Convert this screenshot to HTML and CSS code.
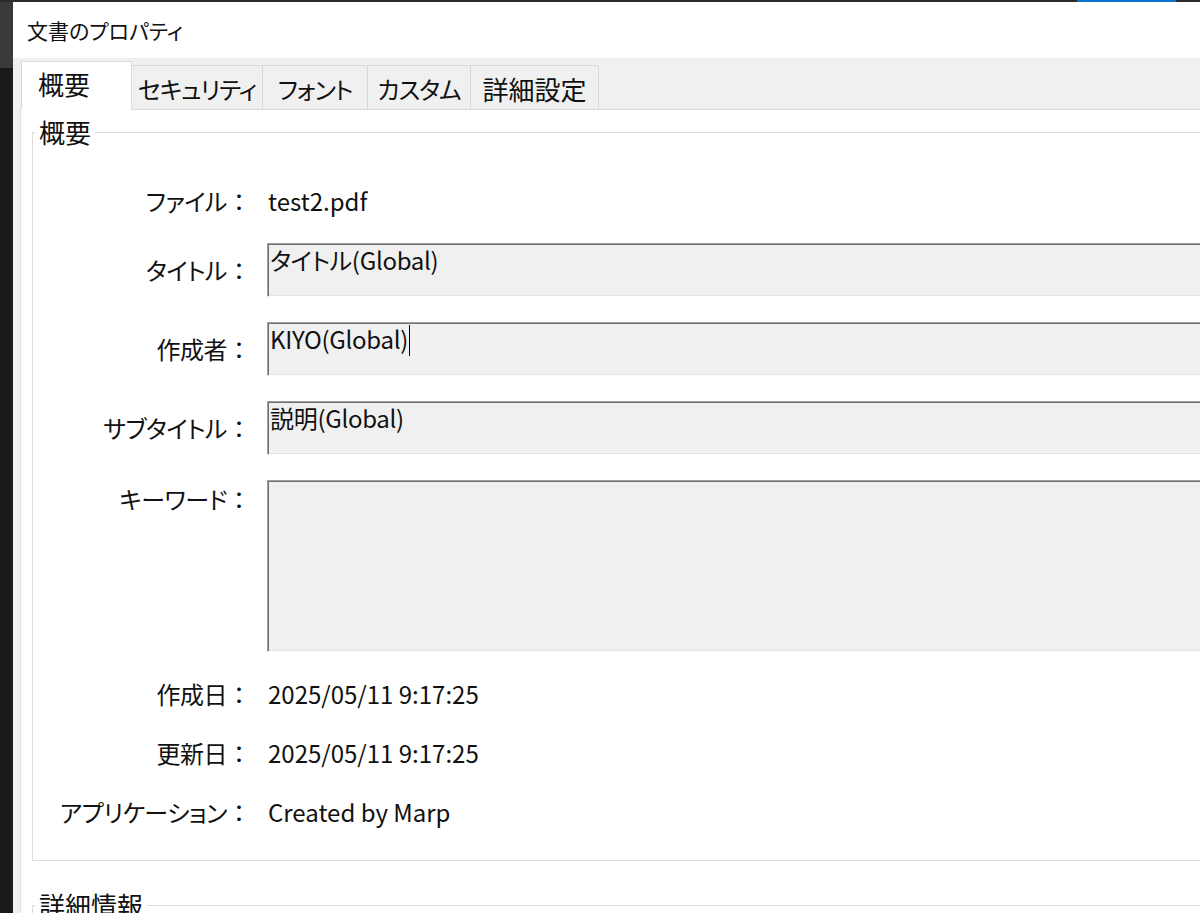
FILE: index.html
```html
<!DOCTYPE html>
<html lang="ja">
<head>
<meta charset="utf-8">
<title>文書のプロパティ</title>
<link rel="stylesheet" href="styles.css">
</head>
<body>
<div class="screen">
  <div class="topbar"><div class="topbar-fill"></div><div class="topbar-active"></div></div>
  <div class="desk">
    <div class="left-strip"><div class="ls-top"></div><div class="ls-bottom"></div></div>
    <div class="window">
      <div class="titlebar">文書のプロパティ</div>
      <div class="dialog-body">
        <div class="tabs">
          <div class="tab active">概要</div>
          <div class="tab tab-security">セキュリティ</div>
          <div class="tab tab-font">フォント</div>
          <div class="tab tab-custom">カスタム</div>
          <div class="tab tab-advanced">詳細設定</div>
        </div>
        <div class="tabpage">
          <fieldset class="group">
            <legend>概要</legend>
            <div class="rows">
              <div class="row"><div class="label">ファイル<span class="colon">：</span></div><div class="value">test2.pdf</div></div>
              <div class="row"><div class="label">タイトル<span class="colon">：</span></div><div class="box">タイトル(Global)</div></div>
              <div class="row"><div class="label">作成者<span class="colon">：</span></div><div class="box">KIYO(Global)<span class="caret"></span></div></div>
              <div class="row"><div class="label">サブタイトル<span class="colon">：</span></div><div class="box">説明(Global)</div></div>
              <div class="row row-top"><div class="label">キーワード<span class="colon">：</span></div><div class="box box-tall"></div></div>
              <div class="row"><div class="label">作成日<span class="colon">：</span></div><div class="value">2025/05/11 9:17:25</div></div>
              <div class="row"><div class="label">更新日<span class="colon">：</span></div><div class="value">2025/05/11 9:17:25</div></div>
              <div class="row"><div class="label">アプリケーション<span class="colon">：</span></div><div class="value">Created by Marp</div></div>
            </div>
          </fieldset>
          <fieldset class="group group-detail">
            <legend>詳細情報</legend>
            <div class="detail-space"></div>
          </fieldset>
        </div>
      </div>
    </div>
  </div>
</div>
</body>
</html>
```

FILE: styles.css
```css
html, body {
  margin: 0;
  padding: 0;
  height: 100%;
  overflow: hidden;
  background: #1b1b1b;
}

.screen {
  width: 1200px;
  height: 913px;
  overflow: hidden;
  display: flex;
  flex-direction: column;
  font-family: "Noto Sans CJK JP", "Noto Sans", sans-serif;
  font-feature-settings: "palt";
  color: #111;
}

.topbar {
  display: flex;
  height: 2px;
  flex: 0 0 2px;
  background: #2c2c2c;
}
.topbar-fill { flex: 0 0 1077px; }
.topbar-active { flex: 0 0 99px; background: #0c74d0; }

.desk {
  display: flex;
  flex: 1;
  min-height: 0;
}

.left-strip {
  flex: 0 0 13px;
  display: flex;
  flex-direction: column;
}
.ls-top { height: 66px; background: #393939; }
.ls-bottom { flex: 1; background: #1a1a1a; }

.window {
  flex: 0 0 1300px;
  background: #ffffff;
  display: flex;
  flex-direction: column;
  min-height: 0;
}

.titlebar {
  flex: 0 0 56px;
  padding-left: 14px;
  display: flex;
  align-items: center;
  font-size: 21px;
  color: #111;
}

.dialog-body {
  flex: 1 0 auto;
  background: #f0f0f0;
  padding-left: 7px;
  display: flex;
  flex-direction: column;
}

.tabs {
  flex: 0 0 51px;
  display: flex;
  align-items: flex-end;
  padding-left: 1px;
  position: relative;
  z-index: 1;
}

.tab {
  height: 44px;
  box-sizing: border-box;
  padding: 1px 0 0;
  display: flex;
  align-items: center;
  justify-content: center;
  font-size: 24px;
  letter-spacing: -1px;
  border: 1px solid #dadada;
  border-left: none;
  border-bottom: none;
  background: #f0f0f0;
  white-space: nowrap;
}
.tab-security { width: 131px; }
.tab-font { width: 105px; }
.tab-custom { width: 103px; }
.tab-advanced { width: 128px; font-size: 26px; letter-spacing: 0; }

.tab.active {
  width: 111px;
  height: 49px;
  margin-bottom: -1px;
  padding: 0 0 5px 16px;
  justify-content: flex-start;
  font-size: 26px;
  letter-spacing: 0;
  background: #ffffff;
  border-left: 1px solid #dadada;
  border-right: 1px solid #dadada;
}

.tabpage {
  flex: 1 0 auto;
  background: #ffffff;
  border-top: 1px solid #dcdcdc;
  border-left: 1px solid #e0e0e0;
  padding: 7px 0 0 11px;
}

.group {
  margin: 0;
  padding: 37px 0 31px 2px;
  border: 1px solid #dcdcdc;
  min-width: 0;
}

.group legend {
  padding: 0 4px;
  font-size: 26px;
  line-height: 30px;
}

.group-detail {
  margin-top: 29px;
  padding-bottom: 0;
}
.detail-space { height: 100px; }

.rows {
  display: flex;
  flex-direction: column;
  gap: 25px;
}

.row {
  display: grid;
  grid-template-columns: 216px 1fr;
  column-gap: 16px;
  align-items: center;
  min-height: 34px;
}
.row-top { align-items: start; }
.row-top .label { padding-top: 4px; }

.label {
  text-align: right;
  font-size: 24px;
  line-height: 30px;
  letter-spacing: -0.5px;
  white-space: nowrap;
}

.colon {
  font-feature-settings: "palt" 0;
  letter-spacing: 0;
}

.value {
  padding-left: 1px;
  font-size: 24px;
  line-height: 30px;
}

.box {
  height: 54px;
  box-sizing: border-box;
  background: #f0f0f0;
  border-top: 1px solid #a0a0a0;
  border-left: 1px solid #a0a0a0;
  border-right: 1px solid #ffffff;
  border-bottom: 1px solid #ffffff;
  box-shadow: inset 1px 1px 0 #6f6f6f, inset -1px -1px 0 #e3e3e3;
  padding: 1px 2px 0;
  font-size: 24px;
  line-height: 30px;
  letter-spacing: -0.3px;
  white-space: nowrap;
}

.box-tall { height: 172px; }

.caret {
  display: inline-block;
  width: 1px;
  height: 31px;
  background: #000;
  vertical-align: -7px;
  margin-left: 1px;
}
```
